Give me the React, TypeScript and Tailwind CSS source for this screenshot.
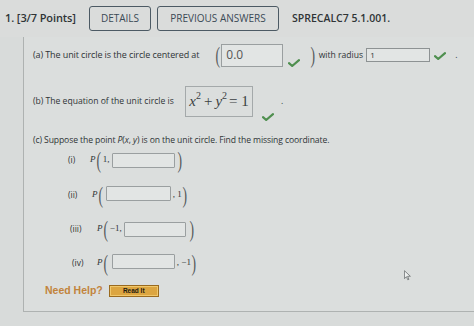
import React from 'react';

const Check = ({ className = '' }: { className?: string }) => (
  <svg viewBox="0 0 12 8" className={`w-[12px] h-[8px] ${className}`}>
    <path d="M1 4.2 L4.2 7 L11 1.2" fill="none" stroke="#4f8f4f" strokeWidth="2.2" strokeLinecap="round" strokeLinejoin="round" />
  </svg>
);

const Paren = ({ ch, className = '' }: { ch: string; className?: string }) => (
  <span className={`inline-block font-['Liberation_Serif',serif] text-[16px] leading-none scale-y-[1.5] scale-x-[0.85] text-[#55595b] ${className}`}>
    {ch}
  </span>
);

const Box = ({ w }: { w: string }) => (
  <span className={`inline-block h-[15px] ${w} border border-[#9a9fa0] bg-[#e2e5e4] rounded-[1px]`} />
);

const App = () => {
  return (
    <div className="w-[474px] h-[326px] overflow-hidden bg-[#d8dbda] text-[#2f3436] font-['Open_Sans',sans-serif] relative">
      {/* header */}
      <div className="h-[37px] flex items-center pl-[5px] bg-[#dadcdb]">
        <span className="text-[11px] font-semibold w-[84px] tracking-[-0.1px]">1. [3/7 Points]</span>
        <span className="w-[62px] h-[25px] flex items-center justify-center border border-[#4c5a64] rounded-[3px] text-[10px] text-[#3b4a55]">
          DETAILS
        </span>
        <span className="ml-[6px] w-[122px] h-[25px] flex items-center justify-center border border-[#4c5a64] rounded-[3px] text-[10px] text-[#3b4a55]">
          PREVIOUS ANSWERS
        </span>
        <span className="ml-[13px] text-[10.5px] font-semibold">SPRECALC7 5.1.001.</span>
      </div>

      {/* question panel */}
      <div className="ml-[23px] h-[275px] border-l border-b border-[#aeb2b1] bg-[#dbdedd] pl-[9px] pt-[6px] text-[8.6px]">
        {/* (a) */}
        <div className="flex items-center h-[24px]">
          <span className="w-[182px] text-[9px] tracking-[-0.1px]">(a) The unit circle is the circle centered at</span>
          <Paren ch="(" />
          <span className="ml-[1px] w-[62px] h-[23px] border border-[#9a9fa0] bg-[#e2e5e4] flex items-center pl-[4px] text-[12px] text-[#555]">
            0.0
          </span>
          <Check className="ml-[5px] mt-[16px]" />
          <Paren ch=")" className="ml-[10px]" />
          <span className="ml-[3px]">with radius</span>
          <span className="ml-[3px] w-[64px] h-[14px] border border-[#8d9293] bg-[#e2e5e4] flex items-center pl-[3px] text-[8px]">1</span>
          <Check className="ml-[4px] mt-[2px]" />
          <span className="ml-[9px]">.</span>
        </div>

        {/* (b) */}
        <div className="flex items-center mt-[19px] h-[31px]">
          <span className="w-[152px]">(b) The equation of the unit circle is</span>
          <span className="w-[68px] h-[31px] border border-[#a4a9aa] flex items-center justify-center font-['Liberation_Serif',serif] text-[15px] text-[#3a3f41]">
            <i>x</i>
            <sup className="text-[10px] -top-[6px]">2</sup>
            <span className="mx-[3px]">+</span>
            <i>y</i>
            <sup className="text-[10px] -top-[6px]">2</sup>
            <span className="ml-[2px]">= 1</span>
          </span>
          <Check className="ml-[9px] mt-[30px]" />
          <span className="ml-[7px]">.</span>
        </div>

        {/* (c) */}
        <div className="mt-[17px] h-[12px] flex items-center tracking-[-0.1px]">
          (c) Suppose the point&nbsp;<i>P</i>(<i>x</i>,&nbsp;<i>y</i>) is on the unit circle. Find the missing coordinate.
        </div>

        <div className="mt-[3px] flex items-center h-[22px] pl-[35px]">
          <span className="w-[22px] text-[8.5px]">(i)</span>
          <i className="font-['Liberation_Serif',serif] text-[9px]">P</i>
          <Paren ch="(" />
          <span className="font-['Liberation_Serif',serif] text-[9px] mx-[2px]">1,</span>
          <Box w="w-[63px]" />
          <Paren ch=")" className="ml-[2px]" />
        </div>

        <div className="mt-[13px] flex items-center h-[22px] pl-[35px]">
          <span className="w-[24px] text-[8.5px]">(ii)</span>
          <i className="font-['Liberation_Serif',serif] text-[9px]">P</i>
          <Paren ch="(" />
          <span className="ml-[3px]"><Box w="w-[65px]" /></span>
          <span className="font-['Liberation_Serif',serif] text-[9px] ml-[2px]">, 1</span>
          <Paren ch=")" />
        </div>

        <div className="mt-[12px] flex items-center h-[22px] pl-[37px]">
          <span className="w-[27px] text-[8.5px]">(iii)</span>
          <i className="font-['Liberation_Serif',serif] text-[9px]">P</i>
          <Paren ch="(" />
          <span className="font-['Liberation_Serif',serif] text-[9px] mx-[2px]">−1,</span>
          <Box w="w-[62px]" />
          <Paren ch=")" className="ml-[3px]" />
        </div>

        <div className="mt-[12px] flex items-center h-[22px] pl-[39px]">
          <span className="w-[25px] text-[8.5px]">(iv)</span>
          <i className="font-['Liberation_Serif',serif] text-[9px]">P</i>
          <Paren ch="(" />
          <span className="ml-[4px]"><Box w="w-[63px]" /></span>
          <span className="font-['Liberation_Serif',serif] text-[9px] ml-[2px]">, −1</span>
          <Paren ch=")" />
        </div>

        <div className="mt-[10px] flex items-center h-[13px] pl-[12px]">
          <span className="font-['Liberation_Sans',sans-serif] font-bold text-[10.5px] text-[#c2843c]">Need Help?</span>
          <span className="ml-[6px] w-[50px] h-[12px] border border-[#9a6a1e] bg-[#dca540] flex items-center justify-center font-['Liberation_Sans',sans-serif] font-bold text-[6.5px] text-[#1f1a10] shadow-[inset_0_0_0_1px_#f0c76a]">
            Read It
          </span>
        </div>
      </div>

      {/* mouse cursor */}
      <svg viewBox="0 0 8 12" className="absolute left-[404px] top-[270px] w-[7px] h-[11px]">
        <path d="M0.5 0.5 L0.5 9.5 L2.8 7.4 L4.4 11 L5.6 10.4 L4.1 6.9 L7.3 6.9 Z" fill="#eef0ef" stroke="#5a5f60" strokeWidth="0.8" />
      </svg>
    </div>
  );
};

export default App;
